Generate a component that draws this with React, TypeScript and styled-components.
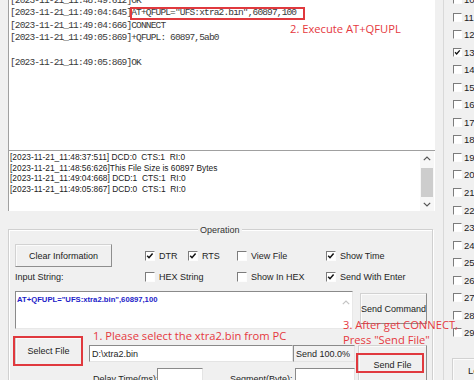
import React from "react";
import styled, { createGlobalStyle } from "styled-components";

const GlobalStyle = createGlobalStyle`
  html, body { margin: 0; padding: 0; background: #f0f0f0; }
  #root { width: 474px; height: 380px; overflow: hidden; }
`;

const UI = `"Liberation Sans", Arial, sans-serif`;

const Page = styled.div`
  position: relative;
  width: 474px;
  height: 380px;
  overflow: hidden;
  display: flex;
  background: #f0f0f0;
  font-family: ${UI};
  font-size: 9px;
  color: #1e1e1e;
`;

const Main = styled.div`
  width: 443px;
  flex: none;
  padding-left: 8px;
  box-sizing: border-box;
  display: flex;
  flex-direction: column;
`;

const Terminal = styled.div`
  width: 427px;
  height: 150px;
  flex: none;
  box-sizing: border-box;
  background: #fff;
  border-left: 1px solid #a0a0a0;
  padding-left: 1px;
  overflow: hidden;
  font-family: "Liberation Mono", monospace;
  font-size: 9.5px;
  letter-spacing: -0.85px;
  line-height: 12.5px;
  color: #3a3a3a;
  white-space: pre;
`;

const TermBody = styled.div`
  margin-top: -5.3px;
`;

const TermLine = styled.div`
  height: 12.5px;
`;

const LogPane = styled.div`
  width: 427px;
  height: 61px;
  flex: none;
  box-sizing: border-box;
  background: #fff;
  border-top: 1px solid #a0a0a0;
  border-left: 1px solid #a0a0a0;
  display: flex;
`;

const LogText = styled.div`
  flex: 1;
  padding: 1px 0 0 1px;
  font-size: 8.4px;
  line-height: 10.6px;
  white-space: pre;
  color: #222;
`;

const ScrollBar = styled.div`
  width: 14px;
  margin-right: 1px;
  display: flex;
  flex-direction: column;
  background: #f7f7f7;
`;

const ScrollArrow = styled.div<{ $h: number }>`
  height: ${(p) => p.$h}px;
  display: flex;
  align-items: center;
  justify-content: center;
`;

const ScrollTrack = styled.div`
  flex: 1;
  padding: 2px 1px 0;
`;

const Thumb = styled.div`
  height: 29px;
  background: #cdcdcd;
`;

const Group = styled.div`
  position: relative;
  margin-top: 18px;
  width: 425px;
  flex: 1 0 auto;
  box-sizing: border-box;
  border: 1px solid #d0d0d0;
  box-shadow: inset 1px 1px 0 #fff, 1px 1px 0 #fff;
  padding: 14px 0 0 6px;
`;

const GroupLabel = styled.span`
  position: absolute;
  top: -5px;
  left: 189px;
  padding: 0 2px;
  line-height: 10px;
  background: #f0f0f0;
  color: #333;
`;

const OpGrid = styled.div`
  display: grid;
  grid-template-columns: 130px 43px 49px 89px 1fr;
  grid-template-rows: 23px 20px;
  align-items: center;
`;

const Btn = styled.div<{ $w: number; $h: number }>`
  width: ${(p) => p.$w}px;
  height: ${(p) => p.$h}px;
  flex: none;
  box-sizing: border-box;
  display: flex;
  align-items: center;
  justify-content: center;
  background: #f0f0f0;
  border: 1px solid;
  border-color: #d2d2d2 #8e8e8e #8e8e8e #d2d2d2;
  box-shadow: inset 1px 1px 0 #fbfbfb;
  white-space: nowrap;
  color: #222;
`;

const Box = styled.span<{ $size: number }>`
  width: ${(p) => p.$size}px;
  height: ${(p) => p.$size}px;
  flex: none;
  box-sizing: border-box;
  background: #fff;
  border-style: solid;
  border-width: 1px;
  border-color: #7c7c7c #fdfdfd #fdfdfd #7c7c7c;
  display: flex;
  align-items: flex-start;
  justify-content: flex-start;
`;

const Option = styled.div<{ $span?: number }>`
  display: flex;
  align-items: center;
  gap: 4px;
  white-space: nowrap;
  grid-column: span ${(p) => p.$span ?? 1};
`;

const FieldLabel = styled.div`
  white-space: nowrap;
`;

const InputRow = styled.div`
  display: flex;
  align-items: flex-start;
  margin-top: 4px;
`;

const InputBox = styled.div`
  width: 338px;
  height: 38px;
  box-sizing: border-box;
  background: #fff;
  border-style: solid;
  border-width: 1px;
  border-color: #8a8a8a #e8e8e8 #e8e8e8 #8a8a8a;
  display: flex;
`;

const InputText = styled.div`
  flex: 1;
  padding: 3px 0 0 1px;
  font-weight: bold;
  font-size: 7.7px;
  line-height: 10px;
  color: #1c1cc8;
  white-space: pre;
`;

const InputScroll = styled.div`
  width: 13px;
  padding-top: 8px;
  display: flex;
  justify-content: center;
`;

const SideGap = styled.div<{ $l: number; $t: number }>`
  margin-left: ${(p) => p.$l}px;
  margin-top: ${(p) => p.$t}px;
`;

const FileRow = styled.div`
  display: flex;
  align-items: flex-start;
  margin-top: 8px;
`;

const MidCol = styled.div`
  width: 266px;
  margin-left: 7px;
  padding-top: 8px;
  display: flex;
  flex-direction: column;
`;

const PathRow = styled.div`
  display: flex;
  height: 17px;
`;

const Sunken = styled.div<{ $w: number; $bg?: string }>`
  width: ${(p) => p.$w}px;
  height: 100%;
  box-sizing: border-box;
  background: ${(p) => p.$bg ?? "#fff"};
  border-style: solid;
  border-width: 1px;
  border-color: #8a8a8a #e4e4e4 #e4e4e4 #8a8a8a;
  padding: 0 0 0 2px;
  display: flex;
  align-items: center;
  white-space: nowrap;
`;

const DelayRow = styled.div`
  display: grid;
  grid-template-columns: 68px 46px 92px 60px;
  height: 16px;
  margin-top: 6px;
  align-items: start;
`;

const DelayLabel = styled.div<{ $pad: number }>`
  padding-left: ${(p) => p.$pad}px;
  padding-top: 6px;
  white-space: nowrap;
`;

const Side = styled.div`
  flex: 1;
  border-left: 1px solid #d9d9d9;
  padding-left: 9px;
  display: flex;
  flex-direction: column;
  overflow: hidden;
`;

const SideList = styled.div`
  margin-top: -9.3px;
  display: flex;
  flex-direction: column;
`;

const SideRow = styled.div`
  height: 17.55px;
  display: flex;
  align-items: center;
  gap: 2px;
  font-size: 9.5px;
  white-space: nowrap;
  color: #222;
`;

const SideBtn = styled(Btn)`
  margin-top: 16px;
  margin-left: -1px;
  justify-content: flex-start;
  padding-left: 15px;
  font-size: 9.5px;
`;

const AnnotText = styled.div<{ $x: number; $y: number }>`
  position: absolute;
  left: ${(p) => p.$x}px;
  top: ${(p) => p.$y}px;
  font-family: "Open Sans", "Noto Sans", sans-serif;
  font-size: 11.2px;
  line-height: 15px;
  color: #e5383e;
  white-space: pre;
`;

const AnnotBox = styled.div<{ $x: number; $y: number; $w: number; $h: number }>`
  position: absolute;
  left: ${(p) => p.$x}px;
  top: ${(p) => p.$y}px;
  width: ${(p) => p.$w}px;
  height: ${(p) => p.$h}px;
  box-sizing: border-box;
  border: 2px solid #e0393e;
`;

const ChevUp = ({ color = "#555" }: { color?: string }) => (
  <svg width="8" height="5" viewBox="0 0 8 5">
    <polyline points="0.8,4.2 4,1 7.2,4.2" fill="none" stroke={color} strokeWidth="1.2" />
  </svg>
);

const ChevDown = () => (
  <svg width="8" height="5" viewBox="0 0 8 5">
    <polyline points="0.8,0.8 4,4 7.2,0.8" fill="none" stroke="#555" strokeWidth="1.2" />
  </svg>
);

const Check = ({ on, size }: { on?: boolean; size: number }) => (
  <Box $size={size}>
    {on && (
      <svg width={size - 2} height={size - 2} viewBox="0 0 8 8">
        <path d="M1.2 3.8 L3 5.7 L6.6 1.5" fill="none" stroke="#111" strokeWidth="1.5" />
      </svg>
    )}
  </Box>
);

const termLines = [
  "[2023-11-21_11:48:49:612]OK",
  '[2023-11-21_11:49:04:645]AT+QFUPL="UFS:xtra2.bin",60897,100',
  "[2023-11-21_11:49:04:666]CONNECT",
  "[2023-11-21_11:49:05:869]+QFUPL: 60897,5ab0",
  "",
  "[2023-11-21_11:49:05:869]OK",
];

const logLines = [
  "[2023-11-21_11:48:37:511] DCD:0  CTS:1  RI:0",
  "[2023-11-21_11:48:56:626]This File Size is 60897 Bytes",
  "[2023-11-21_11:49:04:668] DCD:1  CTS:1  RI:0",
  "[2023-11-21_11:49:05:867] DCD:0  CTS:1  RI:0",
];

const sideItems = Array.from({ length: 20 }, (_, i) => i + 10);

export default function App() {
  return (
    <>
      <GlobalStyle />
      <Page>
        <Main>
          <Terminal>
            <TermBody>
              {termLines.map((l, i) => (
                <TermLine key={i}>{l}</TermLine>
              ))}
            </TermBody>
          </Terminal>
          <LogPane>
            <LogText>
              {logLines.map((l, i) => (
                <div key={i}>{l}</div>
              ))}
            </LogText>
            <ScrollBar>
              <ScrollArrow $h={15}>
                <ChevUp />
              </ScrollArrow>
              <ScrollTrack>
                <Thumb />
              </ScrollTrack>
              <ScrollArrow $h={14}>
                <ChevDown />
              </ScrollArrow>
            </ScrollBar>
          </LogPane>
          <Group>
            <GroupLabel>Operation</GroupLabel>
            <OpGrid>
              <Btn $w={97} $h={23}>Clear Information</Btn>
              <Option>
                <Check on size={10} />
                DTR
              </Option>
              <Option>
                <Check on size={10} />
                RTS
              </Option>
              <Option>
                <Check size={10} />
                View File
              </Option>
              <Option>
                <Check on size={10} />
                Show Time
              </Option>
              <FieldLabel>Input String:</FieldLabel>
              <Option $span={2}>
                <Check size={10} />
                HEX String
              </Option>
              <Option>
                <Check size={10} />
                Show In HEX
              </Option>
              <Option>
                <Check on size={10} />
                Send With Enter
              </Option>
            </OpGrid>
            <InputRow>
              <InputBox>
                <InputText>AT+QFUPL="UFS:xtra2.bin",60897,100</InputText>
                <InputScroll>
                  <ChevUp color="#c4c4c4" />
                </InputScroll>
              </InputBox>
              <SideGap $l={7} $t={2}>
                <Btn $w={67} $h={31}>Send Command</Btn>
              </SideGap>
            </InputRow>
            <FileRow>
              <Btn $w={67} $h={28}>Select File</Btn>
              <MidCol>
                <PathRow>
                  <Sunken $w={204}>D:\xtra2.bin</Sunken>
                  <Sunken $w={62} $bg="#f2f2f2">Send 100.0%</Sunken>
                </PathRow>
                <DelayRow>
                  <DelayLabel $pad={4}>Delay Time(ms):</DelayLabel>
                  <Sunken $w={46} />
                  <DelayLabel $pad={27}>Segment(Byte):</DelayLabel>
                  <Sunken $w={60} />
                </DelayRow>
              </MidCol>
              <SideGap $l={3} $t={8}>
                <Btn $w={69} $h={40}>Send File</Btn>
              </SideGap>
            </FileRow>
          </Group>
        </Main>
        <Side>
          <SideList>
            {sideItems.map((n) => (
              <SideRow key={n}>
                <Check size={9} on={n === 13} />
                {n}
              </SideRow>
            ))}
          </SideList>
          <SideBtn $w={60} $h={26}>Load</SideBtn>
        </Side>

        <AnnotBox $x={130} $y={7} $w={175} $h={13} />
        <AnnotText $x={290} $y={20.5}>2. Execute AT+QFUPL</AnnotText>
        <AnnotBox $x={13} $y={336} $w={70} $h={30} />
        <AnnotText $x={93} $y={327.5}>1. Please select the xtra2.bin from PC</AnnotText>
        <AnnotText $x={343} $y={316.5}>{'3. After get CONNECT,\nPress "Send File"'}</AnnotText>
        <AnnotBox $x={356} $y={353} $w={68} $h={20} />
      </Page>
    </>
  );
}
